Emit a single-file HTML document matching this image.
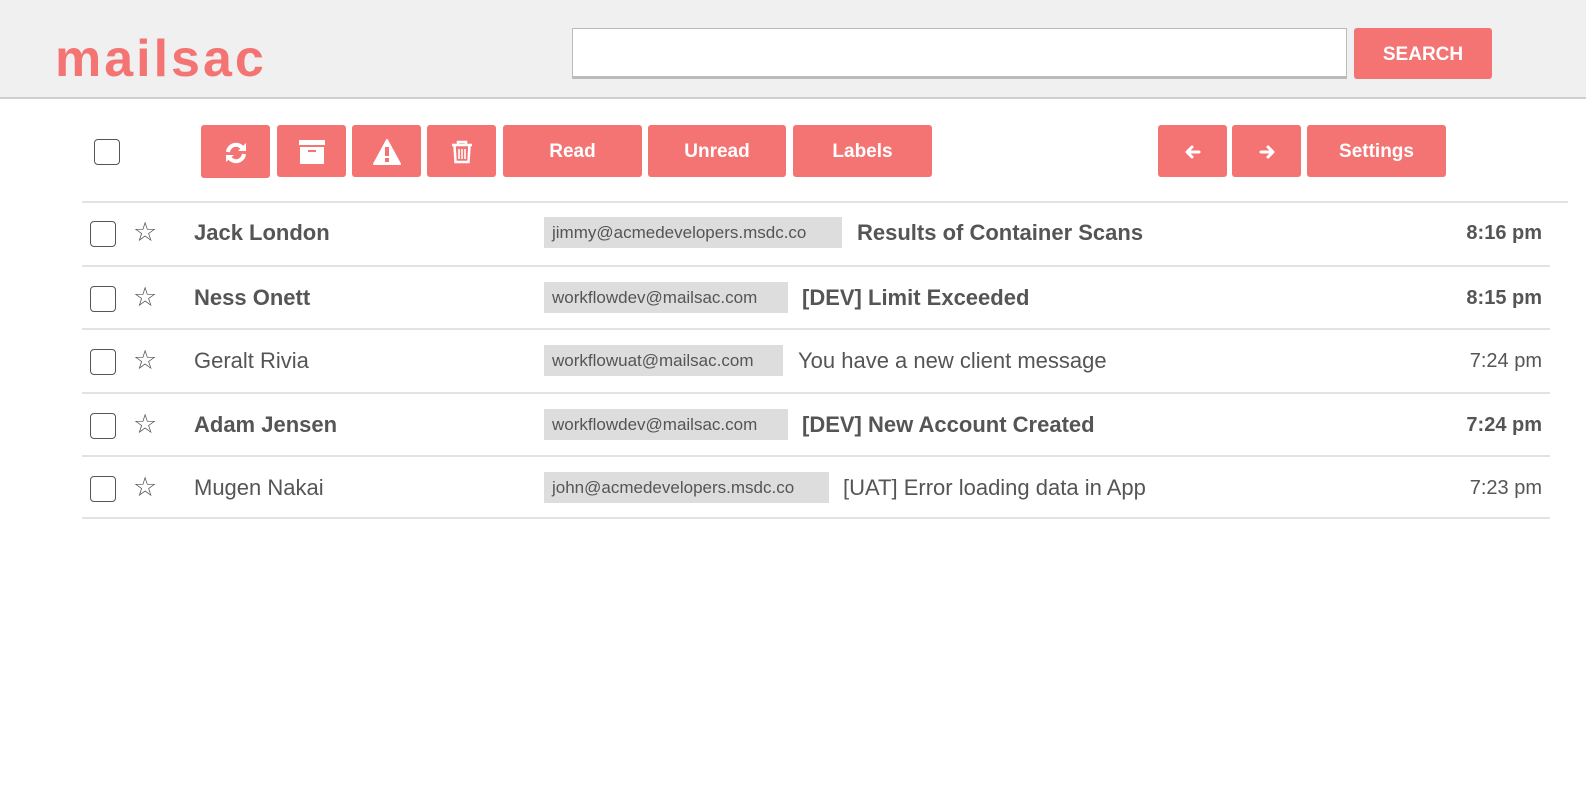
<!DOCTYPE html>
<html><head><meta charset="utf-8"><style>
*{box-sizing:border-box;margin:0;padding:0}
body{width:1586px;height:807px;background:#fff;font-family:"Liberation Sans",Arial,sans-serif;color:#555;position:relative;overflow:hidden}
.hdr{position:absolute;left:0;top:0;width:1586px;height:99px;background:#f0f0f0;border-bottom:2px solid #cfcfcf}
.logo{position:absolute;left:55px;top:29px;font-size:52px;font-weight:bold;color:#f47474;letter-spacing:3px;line-height:60px}
.search{position:absolute;left:572px;top:28px;width:775px;height:51px;background:#fff;border:1px solid #bbb;border-bottom:3px solid #bbb}
.btn{position:absolute;background:#f47474;color:#fff;font-weight:bold;font-size:19px;border-radius:3px;display:flex;align-items:center;justify-content:center;padding-top:2px}
.cb{position:absolute;width:26px;height:26px;border:1.5px solid #555;border-radius:4px;background:#fff}
.row{position:absolute;left:82px;width:1468px;height:63px;border-top:2px solid #e3e3e3}
.row .cb{left:8px;top:19px}
.star{position:absolute;left:51px;top:15px;font-size:27px;color:#555}
.name{position:absolute;left:112px;top:18px;font-size:22px}
.tag{position:absolute;left:462px;top:15px;height:31px;background:#ddd;font-size:17px;line-height:31px;padding:0 8px}
.subj{position:absolute;top:18px;font-size:22px}
.time{position:absolute;right:8px;top:20px;font-size:20px}
.b{font-weight:bold}
</style></head><body>
<div class="hdr">
<div class="logo">mailsac</div>
<div class="search"></div>
<div class="btn" style="left:1354px;top:28px;width:138px;height:51px">SEARCH</div>
</div>
<div class="cb" style="left:94px;top:139px"></div>
<div class="btn" style="left:201px;top:125px;width:69px;height:53px"><svg width="26" height="26" viewBox="0 0 26 26" fill="none" stroke="#fff" stroke-width="4"><path d="M5 12 A8 8 0 0 1 20 9"/><path d="M21 14 A8 8 0 0 1 6 17"/><path d="M23 3 L23 11 L15 11Z" fill="#fff" stroke="none"/><path d="M3 22 L3 15 L11 15Z" fill="#fff" stroke="none"/></svg></div>
<div class="btn" style="left:277px;top:125px;width:69px;height:52px"><svg width="26" height="24" viewBox="0 0 26 24"><rect x="0" y="0" width="26" height="5" fill="#fff"/><rect x="1" y="7" width="24" height="17" fill="#fff"/><rect x="9" y="10" width="8" height="2" fill="#f47474"/></svg></div>
<div class="btn" style="left:352px;top:125px;width:69px;height:52px"><svg width="28" height="26" viewBox="0 0 28 26"><path d="M14 1 L27 25 L1 25Z" fill="#fff" stroke="#fff" stroke-linejoin="round" stroke-width="2"/><rect x="12" y="8" width="4" height="9" fill="#f47474"/><rect x="12" y="19" width="4" height="4" fill="#f47474"/></svg></div>
<div class="btn" style="left:427px;top:125px;width:69px;height:52px"><svg width="22" height="24" viewBox="0 0 22 24" fill="none" stroke="#fff" stroke-width="2.5"><path d="M1 5 H21"/><path d="M7 5 V2 H15 V5"/><path d="M3.5 5 L4.5 22 H17.5 L18.5 5"/><path d="M8 9 V19 M11 9 V19 M14 9 V19" stroke-width="1.6"/></svg></div>
<div class="btn" style="left:503px;top:125px;width:139px;height:52px">Read</div>
<div class="btn" style="left:648px;top:125px;width:138px;height:52px">Unread</div>
<div class="btn" style="left:793px;top:125px;width:139px;height:52px">Labels</div>
<div class="btn" style="left:1158px;top:125px;width:69px;height:52px"><svg width="16" height="14" viewBox="0 0 16 14" fill="none" stroke="#fff" stroke-width="3" stroke-linecap="round" stroke-linejoin="round"><path d="M14 7 H3 M7 2 L2 7 L7 12"/></svg></div>
<div class="btn" style="left:1232px;top:125px;width:69px;height:52px"><svg width="16" height="14" viewBox="0 0 16 14" fill="none" stroke="#fff" stroke-width="3" stroke-linecap="round" stroke-linejoin="round"><path d="M2 7 H13 M9 2 L14 7 L9 12"/></svg></div>
<div class="btn" style="left:1307px;top:125px;width:139px;height:52px">Settings</div>
<div style="position:absolute;left:82px;top:201px;width:1486px;height:2px;background:#e3e3e3"></div>

<div class="row" style="top:202px;border-top:none"><div class="cb"></div><div class="star">☆</div><div class="name b">Jack London</div><div class="tag" style="width:298px">jimmy@acmedevelopers.msdc.co</div><div class="subj b" style="left:775px">Results of Container Scans</div><div class="time b">8:16 pm</div></div>
<div class="row" style="top:265px"><div class="cb"></div><div class="star">☆</div><div class="name b">Ness Onett</div><div class="tag" style="width:244px">workflowdev@mailsac.com</div><div class="subj b" style="left:720px">[DEV] Limit Exceeded</div><div class="time b">8:15 pm</div></div>
<div class="row" style="top:328px"><div class="cb"></div><div class="star">☆</div><div class="name">Geralt Rivia</div><div class="tag" style="width:239px">workflowuat@mailsac.com</div><div class="subj" style="left:716px">You have a new client message</div><div class="time">7:24 pm</div></div>
<div class="row" style="top:392px"><div class="cb"></div><div class="star">☆</div><div class="name b">Adam Jensen</div><div class="tag" style="width:244px">workflowdev@mailsac.com</div><div class="subj b" style="left:720px">[DEV] New Account Created</div><div class="time b">7:24 pm</div></div>
<div class="row" style="top:455px;height:64px;border-bottom:2px solid #e3e3e3"><div class="cb"></div><div class="star">☆</div><div class="name">Mugen Nakai</div><div class="tag" style="width:285px">john@acmedevelopers.msdc.co</div><div class="subj" style="left:761px">[UAT] Error loading data in App</div><div class="time">7:23 pm</div></div>
</body></html>
